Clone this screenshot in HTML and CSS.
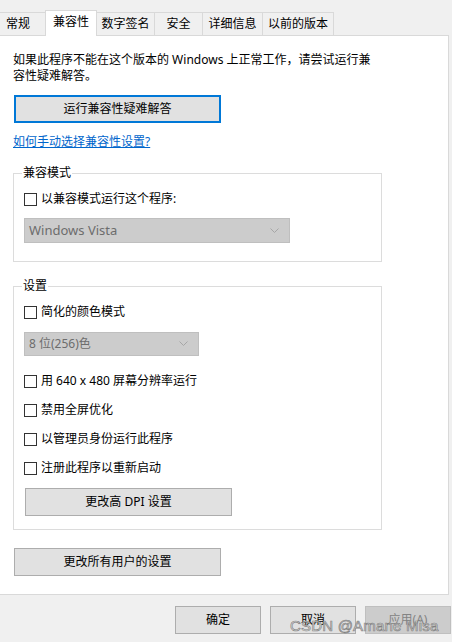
FILE: index.html
```html
<!DOCTYPE html>
<html lang="zh-CN">
<head>
<meta charset="utf-8">
<title>属性</title>
<link rel="stylesheet" href="styles.css">
</head>
<body>
<div class="dialog">
  <div class="tabs">
    <div class="tab t1">常规</div>
    <div class="tab t2 active">兼容性</div>
    <div class="tab t3">数字签名</div>
    <div class="tab t4">安全</div>
    <div class="tab t5">详细信息</div>
    <div class="tab t6">以前的版本</div>
  </div>
  <div class="panel">
    <p class="intro">如果此程序不能在这个版本的 Windows 上正常工作，请尝试运行兼容性疑难解答。</p>
    <button class="btn btn-focus btn-wide">运行兼容性疑难解答</button>
    <a class="link" href="#">如何手动选择兼容性设置?</a>

    <fieldset class="group g1">
      <legend>兼容模式</legend>
      <label class="check first"><span class="box"></span>以兼容模式运行这个程序:</label>
      <div class="select s1"><span>Windows Vista</span><svg class="chev" width="9" height="5" viewBox="0 0 9 5"><path d="M0.5 0.5 L4.5 4.5 L8.5 0.5" fill="none" stroke="#a6a6a6" stroke-width="1"/></svg></div>
    </fieldset>

    <fieldset class="group g2">
      <legend>设置</legend>
      <label class="check first"><span class="box"></span>简化的颜色模式</label>
      <div class="select s2"><span>8 位(256)色</span><svg class="chev" width="9" height="5" viewBox="0 0 9 5"><path d="M0.5 0.5 L4.5 4.5 L8.5 0.5" fill="none" stroke="#a6a6a6" stroke-width="1"/></svg></div>
      <label class="check c2"><span class="box"></span>用 640 x 480 屏幕分辨率运行</label>
      <label class="check c3"><span class="box"></span>禁用全屏优化</label>
      <label class="check c3"><span class="box"></span>以管理员身份运行此程序</label>
      <label class="check c3"><span class="box"></span>注册此程序以重新启动</label>
      <button class="btn btn-wide dpi">更改高 DPI 设置</button>
    </fieldset>

    <button class="btn btn-wide all">更改所有用户的设置</button>
  </div>
  <div class="footer">
    <button class="btn btn-small">确定</button>
    <button class="btn btn-small">取消</button>
    <button class="btn btn-small disabled">应用(A)</button>
  </div>
  <div class="watermark">CSDN @Amane Misa</div>
</div>
</body>
</html>
```
FILE: styles.css
```css
html, body {
  margin: 0;
  padding: 0;
  background: #f0f0f0;
}
body {
  font-family: "Noto Sans", "Noto Sans CJK SC", sans-serif;
  font-size: 12px;
  line-height: 16px;
  color: #000;
}
.dialog {
  position: relative;
  width: 452px;
  height: 642px;
  overflow: hidden;
}
.tabs {
  display: flex;
  align-items: flex-end;
  height: 35px;
  margin-left: -1px;
}
.tab {
  box-sizing: border-box;
  height: 23px;
  border: 1px solid #d9d9d9;
  border-bottom: none;
  margin-right: -1px;
  background: #f0f0f0;
  display: flex;
  align-items: center;
  justify-content: center;
  padding-bottom: 1px;
}
.tab.active {
  background: #fff;
  position: relative;
  z-index: 2;
  margin-bottom: -1px;
  height: 26px;
  padding-bottom: 3px;
}
.t1 { width: 47px; justify-content: flex-start; padding-left: 6px; }
.t2 { width: 52px; }
.t3 { width: 59px; }
.t4 { width: 49px; }
.t5 { width: 61px; }
.t6 { width: 72px; }

.panel {
  box-sizing: border-box;
  margin-left: -1px;
  width: 450px;
  height: 560px;
  background: #fff;
  border: 1px solid #d9d9d9;
  padding: 16px 0 0 13px;
  position: relative;
  z-index: 1;
}
.intro {
  margin: 0;
  width: 365px;
}
.btn {
  box-sizing: border-box;
  display: flex;
  align-items: center;
  justify-content: center;
  font: inherit;
  color: #000;
  background: #e1e1e1;
  border: 1px solid #adadad;
  padding: 0 0 1px;
  margin: 0;
}
.btn-wide {
  width: 207px;
  height: 28px;
}
.btn-focus {
  border: 2px solid #0078d7;
  margin: 11px 0 0 1px;
}
.link {
  display: inline-block;
  margin-top: 11px;
  color: #0066cc;
  text-decoration: underline;
}
.group {
  box-sizing: border-box;
  width: 369px;
  border: 1px solid #dcdcdc;
  margin: 0;
  padding: 0 0 0 10px;
  min-width: 0;
}
.group legend {
  padding: 0 1px;
  margin-left: -2px;
  line-height: 16px;
}
.g1 {
  margin-top: 15px;
  height: 97px;
}
.g2 {
  margin-top: 16px;
  height: 252px;
}
.check {
  display: flex;
  align-items: center;
  height: 16px;
  gap: 4px;
}
.check.first { margin-top: 10px; }
.c2 { margin-top: 17px; }
.c3 { margin-top: 13px; }
.box {
  box-sizing: border-box;
  width: 13px;
  height: 13px;
  border: 1px solid #333;
  background: #fff;
  flex: none;
}
.select {
  box-sizing: border-box;
  display: flex;
  align-items: center;
  justify-content: space-between;
  background: #cccccc;
  border: 1px solid #bfbfbf;
  color: #6d6d6d;
  padding: 0 10px 1px 4px;
  font-size: 13px;
}
.s1 {
  width: 266px;
  height: 25px;
  margin-top: 11px;
}
.s2 {
  width: 175px;
  height: 24px;
  margin-top: 12px;
  font-size: 12px;
}
.chev { flex: none; }
.dpi {
  margin-top: 12px;
  margin-left: 1px;
}
.all {
  margin-top: 18px;
  margin-left: 1px;
}
.footer {
  display: flex;
  justify-content: flex-end;
  gap: 9px;
  padding: 11px 1px 0 0;
}
.btn-small {
  width: 86px;
  height: 28px;
}
.btn.disabled {
  background: #cccccc;
  border-color: #bfbfbf;
  color: #838383;
}
.watermark {
  position: absolute;
  left: 290px;
  top: 617px;
  font-family: "Liberation Sans", sans-serif;
  font-size: 15px;
  line-height: 18px;
  color: rgba(235, 235, 235, 0.85);
  -webkit-text-stroke: 0.7px rgba(110, 110, 110, 0.85);
  letter-spacing: 0.2px;
  z-index: 5;
}
```
